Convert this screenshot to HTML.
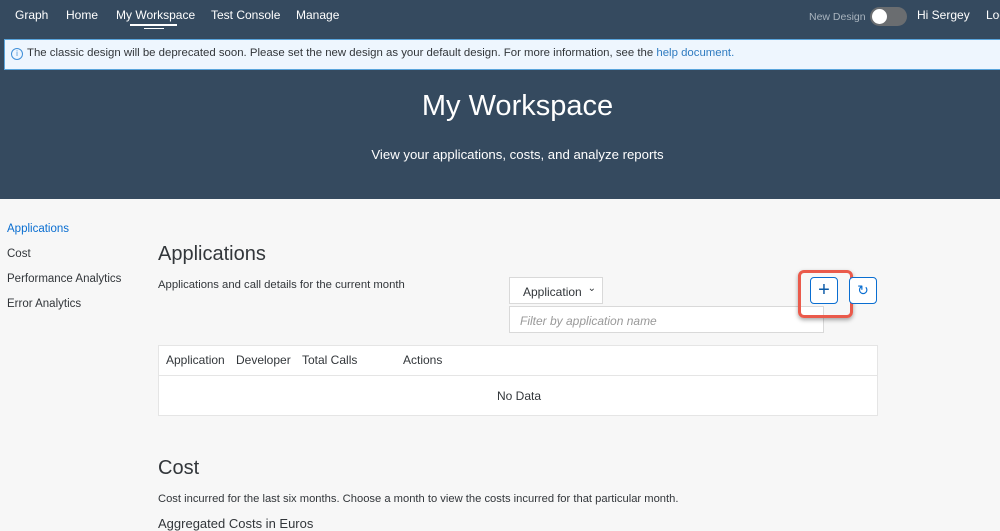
<!DOCTYPE html>
<html><head><style>
*{margin:0;padding:0;box-sizing:border-box}
body{width:1000px;height:524px;overflow:hidden;background:#f7f7f7;font-family:"Liberation Sans",sans-serif;color:#32363a;position:relative}
.hdr{position:absolute;left:0;top:0;width:1000px;height:199px;background:#354a5f}
.nav{position:absolute;top:8px;color:#fff;font-size:12px}
.a{position:absolute;white-space:nowrap}
</style></head><body>
<div class="hdr"></div>
<div class="nav" style="left:15px">Graph</div>
<div class="nav" style="left:66px">Home</div>
<div class="nav" style="left:116px">My Workspace</div>
<div class="nav" style="left:211px">Test Console</div>
<div class="nav" style="left:296px">Manage</div>
<div class="a" style="left:130px;top:24px;width:47px;height:2px;background:#fff"></div>
<div class="a" style="left:144px;top:28px;width:20px;height:1px;background:#fff"></div>
<div class="a" style="left:809px;top:11px;color:#a9b4be;font-size:10.5px">New Design</div>
<div class="a" style="left:870px;top:7px;width:37px;height:19px;border-radius:10px;background:#6a6d70"></div>
<div class="a" style="left:872px;top:9px;width:15px;height:15px;border-radius:50%;background:#fff"></div>
<div class="a" style="left:917px;top:8px;color:#fff;font-size:12px">Hi Sergey</div>
<div class="a" style="left:986px;top:8px;color:#fff;font-size:12px">Log</div>
<div class="a" style="left:4px;top:39px;width:996px;height:31px;background:#eef6fe;border:1px solid #5aa5dc;border-right:none"></div>
<div class="a" style="left:11px;top:48px;width:12px;height:12px;border:1px solid #3f8fd8;border-radius:50%;color:#3f8fd8;font-size:8px;text-align:center;line-height:10px">i</div>
<div class="a" style="left:27px;top:47px;font-size:11.4px;color:#32363a">The classic design will be deprecated soon. Please set the new design as your default design. For more information, see the <span style="color:#2f7bc0">help document.</span></div>
<div class="a" style="left:0;width:1035px;top:90px;text-align:center;color:#fff;font-size:29px">My Workspace</div>
<div class="a" style="left:0;width:1035px;top:147px;text-align:center;color:#fff;font-size:13.2px">View your applications, costs, and analyze reports</div>
<div class="a" style="left:7px;top:223px;font-size:11.5px;color:#0a6ed1">Applications</div>
<div class="a" style="left:7px;top:248px;font-size:11.5px">Cost</div>
<div class="a" style="left:7px;top:273px;font-size:11.5px">Performance Analytics</div>
<div class="a" style="left:7px;top:298px;font-size:11.5px">Error Analytics</div>
<div class="a" style="left:158px;top:243px;font-size:20px">Applications</div>
<div class="a" style="left:158px;top:279px;font-size:11.3px">Applications and call details for the current month</div>
<div class="a" style="left:509px;top:277px;width:94px;height:27px;background:#fff;border:1px solid #d9d9d9;font-size:12px;padding:7px 0 0 13px">Application <span style="position:absolute;right:6px;top:5px;font-size:10px">&#8964;</span></div>
<div class="a" style="left:509px;top:306px;width:315px;height:27px;background:#fff;border:1px solid #d9d9d9;font-size:12px;padding:7px 0 0 10px;color:#999;font-style:italic">Filter by application name</div>
<div class="a" style="left:798px;top:270px;width:55px;height:48px;border:3px solid #ea5a4b;border-radius:6px;box-shadow:0 2px 4px rgba(0,0,0,.35)"></div>
<div class="a" style="left:810px;top:277px;width:28px;height:27px;border:1px solid #0a6ed1;border-radius:4px;background:#fff;color:#0a5aa8;font-size:20px;text-align:center;line-height:24px">+</div>
<div class="a" style="left:849px;top:277px;width:28px;height:27px;border:1px solid #0a6ed1;border-radius:4px;background:#fff;color:#0a6ed1;font-size:14px;text-align:center;line-height:25px">&#8635;</div>
<div class="a" style="left:158px;top:345px;width:720px;height:71px;background:#fff;border:1px solid #e5e5e5"></div>
<div class="a" style="left:158px;top:375px;width:720px;height:1px;background:#e5e5e5"></div>
<div class="a" style="left:166px;top:353px;font-size:12px">Application</div>
<div class="a" style="left:236px;top:353px;font-size:12px">Developer</div>
<div class="a" style="left:302px;top:353px;font-size:12px">Total Calls</div>
<div class="a" style="left:403px;top:353px;font-size:12px">Actions</div>
<div class="a" style="left:497px;top:389px;font-size:12px">No Data</div>
<div class="a" style="left:158px;top:457px;font-size:20px">Cost</div>
<div class="a" style="left:158px;top:493px;font-size:11.2px">Cost incurred for the last six months. Choose a month to view the costs incurred for that particular month.</div>
<div class="a" style="left:158px;top:516px;font-size:13px">Aggregated Costs in Euros</div>
</body></html>
